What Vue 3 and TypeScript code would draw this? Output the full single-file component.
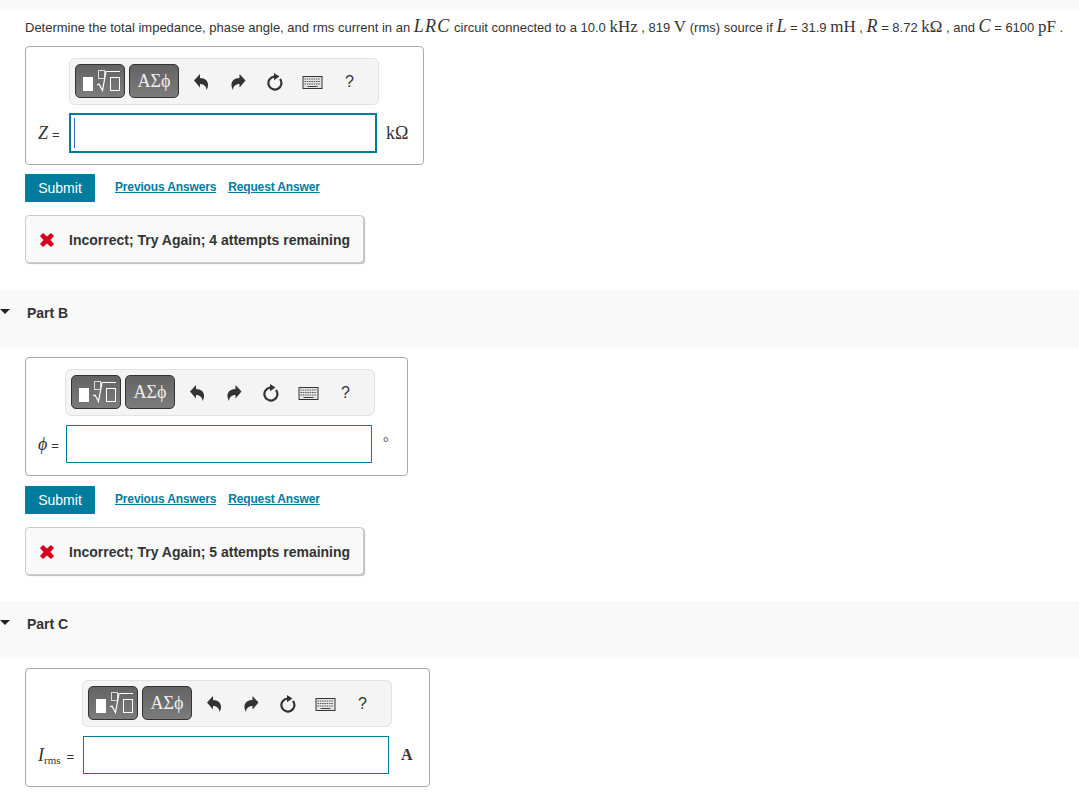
<script setup lang="ts">
interface Part {
  id: string
  title?: string
  symbol: string
  sub?: string
  labelWidth: number
  unit: string
  focused?: boolean
  feedback?: string
}

const parts: Part[] = [
  { id: 'a', symbol: 'Z', labelWidth: 32, unit: 'kΩ', focused: true, feedback: 'Incorrect; Try Again; 4 attempts remaining' },
  { id: 'b', title: 'Part B', symbol: 'ϕ', labelWidth: 28, unit: '°', feedback: 'Incorrect; Try Again; 5 attempts remaining' },
  { id: 'c', title: 'Part C', symbol: 'I', sub: 'rms', labelWidth: 45, unit: 'A' },
]
</script>

<template>
  <main class="page">
    <div class="top-strip"></div>
    <p class="question">
      Determine the total impedance, phase angle, and rms current in an
      <span class="mi wide">LRC</span> circuit connected to a 10.0 <span class="mn">kHz</span> , 819
      <span class="mn">V</span> (rms) source if <span class="mi">L</span> = 31.9 <span class="mn">mH</span> ,
      <span class="mi">R</span> = 8.72 <span class="mn">kΩ</span> , and <span class="mi">C</span> = 6100
      <span class="mn">pF</span> .
    </p>

    <section v-for="part in parts" :key="part.id" class="part" :class="`part-${part.id}`">
      <header v-if="part.title" class="part-head">
        <span class="caret"></span>
        <h2>{{ part.title }}</h2>
      </header>

      <div class="part-body">
        <div class="answer-box">
          <div class="toolbar">
            <button class="tool-btn" type="button" aria-label="Templates">
              <svg width="50" height="34" viewBox="0 0 50 34">
                <rect x="8" y="13" width="10" height="14" fill="#fff" />
                <rect x="23.500" y="6.500" width="6" height="8" fill="none" stroke="#ddd" />
                <path d="M22 21l2-1 3.500 6.500L31 7.500h14" fill="none" stroke="#fff" stroke-width="1.200" />
                <rect x="35.500" y="13.500" width="9" height="13" fill="none" stroke="#fff" />
              </svg>
            </button>
            <button class="tool-btn greek" type="button">ΑΣϕ</button>
            <div class="tool-icons">
              <svg class="icon" width="15" height="17" viewBox="0 0 15 17" aria-label="Undo">
                <path d="M0 6.500 6 0V4C11 4 14.500 7 14 11.500 13.800 13.500 13 15 12.500 16 12.300 12.500 10 10 6 10v3.500z" fill="#333" />
              </svg>
              <svg class="icon" width="15" height="17" viewBox="0 0 15 17" aria-label="Redo">
                <path d="M14.500 6.500 8.500 0V4C3.500 4 0 7 .5 11.500.7 13.500 1.500 15 2 16 2.200 12.500 4.500 10 8.500 10v3.500z" fill="#333" />
              </svg>
              <svg class="icon" width="17" height="18" viewBox="0 0 17 18" aria-label="Reset">
                <path d="M13 6a6.500 6.500 0 1 1-6-2.400" fill="none" stroke="#333" stroke-width="2.200" />
                <path d="M7 0l5.500 3.600L7 7.200z" fill="#333" />
              </svg>
              <svg class="icon" width="20" height="13" viewBox="0 0 20 13" aria-label="Keyboard">
                <rect x=".5" y=".5" width="19" height="12" fill="#e4e4e4" stroke="#333" />
                <path d="M2 3h16M2 5.500h16M2 8h16" stroke="#555" stroke-dasharray="1.500 .8" fill="none" />
                <path d="M5 10.500h10" stroke="#444" fill="none" />
              </svg>
              <span class="help">?</span>
            </div>
          </div>

          <label class="eq-label" :for="`answer-${part.id}`" :style="{ width: `${part.labelWidth}px` }">
            <span class="mi">{{ part.symbol }}</span><sub v-if="part.sub">{{ part.sub }}</sub>
            <span class="eq">=</span>
          </label>
          <div class="field" :class="{ focused: part.focused }">
            <input :id="`answer-${part.id}`" type="text" />
            <span v-if="part.focused" class="cursor"></span>
          </div>
          <span class="unit">{{ part.unit }}</span>
        </div>

        <div v-if="part.feedback" class="actions">
          <button class="submit" type="button">Submit</button>
          <a href="#" class="link">Previous Answers</a>
          <a href="#" class="link">Request Answer</a>
        </div>

        <div v-if="part.feedback" class="feedback">
          <svg width="14" height="14" viewBox="0 0 14 14">
            <path d="M3 0 7 3.500 11 0 14 3 10.500 7 14 11 11 14 7 10.500 3 14 0 11 3.500 7 0 3z" fill="#d6001c" />
          </svg>
          <span>{{ part.feedback }}</span>
        </div>
      </div>
    </section>
  </main>
</template>

<style>
html,
body {
  margin: 0;
  background: #fff;
}
</style>

<style scoped>
.page {
  font-family: 'Liberation Sans', Arial, sans-serif;
  color: #333;
}

.top-strip {
  height: 10px;
  background: #f9f9f9;
}

.question {
  margin: 0;
  padding: 7px 0 0 25px;
  height: 29px;
  font-size: 13px;
  line-height: 18px;
  white-space: nowrap;
}

.question .mi,
.question .mn {
  line-height: 1;
}

.mi {
  font-family: 'Liberation Serif', serif;
  font-style: italic;
  font-size: 18px;
}

.mi.wide {
  letter-spacing: 1.2px;
}

.mn {
  font-family: 'Liberation Serif', serif;
  font-size: 17px;
}

.part-head {
  position: relative;
  height: 57px;
  margin: 27px 0 10px;
  background: #f9f9f9;
}

.part-head h2 {
  margin: 0;
  padding: 15px 0 0 27px;
  font-size: 14px;
  line-height: 17px;
  font-weight: 700;
}

.caret {
  position: absolute;
  left: 0;
  top: 19px;
  border-left: 5px solid transparent;
  border-right: 5px solid transparent;
  border-top: 5px solid #222;
}

.part-body {
  padding-left: 25px;
}

.answer-box {
  display: inline-grid;
  grid-template-columns: auto auto auto;
  align-content: start;
  align-items: center;
  box-sizing: border-box;
  height: 119px;
  padding: 11px 0 0 12px;
  border: 1px solid #aaa;
  border-radius: 4px;
  vertical-align: top;
}

.toolbar {
  grid-column: 2 / 4;
  display: flex;
  align-items: flex-start;
  box-sizing: border-box;
  width: 310px;
  height: 47px;
  margin: 0 0 9px -1px;
  padding: 5px 0 0 5px;
  background: #f4f4f4;
  border: 1px solid #e2e2e2;
  border-radius: 6px;
}

.tool-btn {
  box-sizing: border-box;
  width: 50px;
  height: 34px;
  padding: 0;
  margin-right: 4px;
  border: 1px solid #333;
  border-radius: 5px;
  background: linear-gradient(#636363, #7c7c7c);
  color: #eee;
}

.tool-btn svg {
  display: block;
  margin: -1px;
}

.greek {
  font-family: 'Liberation Serif', serif;
  font-size: 18px;
}

.tool-icons {
  display: flex;
  align-items: center;
  height: 34px;
  margin-top: 1px;
}

.icon {
  flex: none;
  width: 37px;
}

.help {
  width: 37px;
  text-align: center;
  font-size: 16px;
}

.eq-label {
  display: flex;
  align-items: baseline;
  font-size: 13px;
  white-space: nowrap;
}

.eq-label sub {
  font-family: 'Liberation Serif', serif;
  font-size: 11px;
  transform: translateY(3px);
}

.eq {
  margin-left: 4px;
}

.part-c .eq {
  margin-left: 6px;
}

.field {
  position: relative;
  display: flex;
}

.field input {
  box-sizing: border-box;
  width: 306px;
  height: 38px;
  padding: 0;
  border: 1px solid #007c9e;
  outline: none;
  background: #fff;
}

.field.focused input {
  box-shadow: 0 0 0 1px #007c9e;
}

.cursor {
  position: absolute;
  left: 4px;
  top: 4px;
  width: 1px;
  height: 30px;
  background: #3a5fc0;
}

.unit {
  box-sizing: border-box;
  font-family: 'Liberation Serif', serif;
}

.part-a .unit {
  width: 47px;
  padding-left: 10px;
  font-size: 18px;
}

.part-b .unit {
  width: 35px;
  padding-left: 11px;
  font-size: 14px;
  margin-top: -2px;
}

.part-c .unit {
  width: 40px;
  padding-left: 12px;
  font-weight: 700;
  font-size: 16px;
}

.actions {
  display: flex;
  align-items: center;
  height: 28px;
  margin-top: 9px;
}

.part-b .actions {
  margin-top: 10px;
}

.submit {
  width: 70px;
  height: 28px;
  margin-right: 20px;
  padding: 0;
  border: 0;
  border-radius: 1px;
  background: #007c9e;
  color: #fff;
  font: 14px 'Liberation Sans', Arial, sans-serif;
}

.link {
  margin: -2px 12px 0 0;
  color: #007c9e;
  font-size: 12px;
  letter-spacing: -0.15px;
  font-weight: 700;
}

.feedback {
  display: flex;
  align-items: center;
  gap: 15px;
  box-sizing: border-box;
  width: 339px;
  height: 48px;
  margin-top: 13px;
  padding: 1px 0 0 14px;
  background: #f9f9f9;
  border: 1px solid #ccc;
  border-radius: 4px;
  box-shadow: 1px 1px 1px #bbb;
  font-size: 14px;
  font-weight: 700;
  white-space: nowrap;
}

.part-b .feedback {
  margin-bottom: -1px;
}
</style>
